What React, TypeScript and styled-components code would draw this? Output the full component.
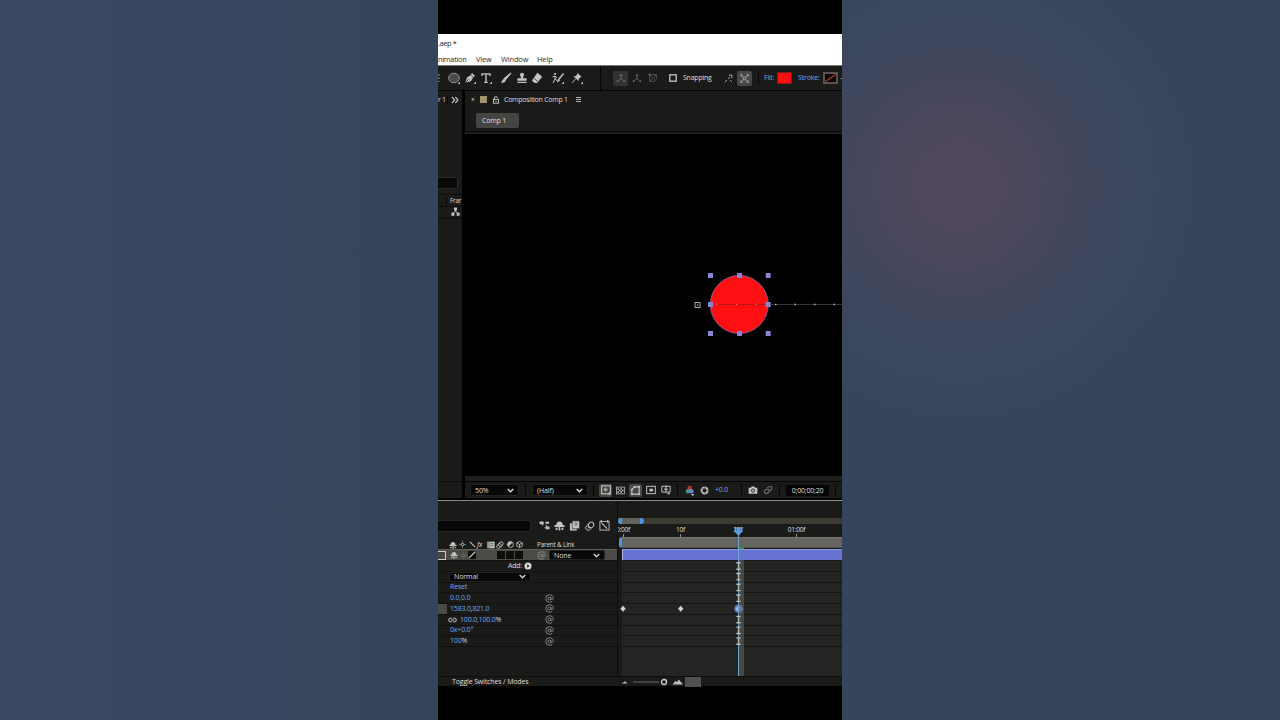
import React from 'react';
import styled, { createGlobalStyle, css } from 'styled-components';

const GlobalStyle = createGlobalStyle`
  * { box-sizing: border-box; }
  html, body { margin: 0; background: #36455c; }
  body { width: 1280px; height: 720px; overflow: hidden; }
`;

const c = {
  panel: '#1a1a18',
  text: '#dededc',
  icon: '#c2c2c0',
  blue: '#70a6f0',
};

const Stage = styled.div`
  display: grid;
  grid-template-columns: 438px 404px 438px;
  width: 1280px;
  height: 720px;
  overflow: hidden;
  font-family: 'Open Sans', 'Noto Sans', sans-serif;
  font-size: 7px;
  font-weight: 500;
  color: ${c.text};
`;

const LeftBackdrop = styled.div`
  background: linear-gradient(90deg, #3a4961 0%, #384760 35%, #36445b 100%);
`;

const RightBackdrop = styled.div`
  background: radial-gradient(
    circle 270px at 117px 185px,
    #53485e 0px, #4f485e 38px, #49475d 80px, #42465b 118px, #3d475e 150px, #39475f 190px, #36455c 240px
  );
`;

const Phone = styled.main`
  display: flex;
  flex-direction: column;
  background: #000;
  padding: 34px 0;
  overflow: hidden;
`;

const TitleBar = styled.header`
  height: 31px;
  flex: none;
  background: #fff;
  color: #2b2b2b;
  font-size: 7.4px;
  font-weight: 400;
  letter-spacing: -0.1px;
  white-space: nowrap;
`;

const FileName = styled.div`
  height: 18px;
  line-height: 19px;
  letter-spacing: -0.4px;
`;

const Menu = styled.nav`
  display: flex;
  height: 13px;
  line-height: 14px;
`;

const MenuItem = styled.span<{ $w: number }>`
  width: ${(p) => p.$w}px;
  flex: none;
`;

const MenuEdgeItem = styled(MenuItem)`
  letter-spacing: -0.3px;
`;

const Row = styled.div<{ $h: number }>`
  display: flex;
  align-items: center;
  height: ${(p) => p.$h}px;
  flex: none;
  white-space: nowrap;
`;

const Toolbar = styled(Row)`
  background: ${c.panel};
  border-top: 1px solid #777775;
  border-bottom: 1px solid #050505;
`;

const HeaderRow = styled(Row)`
  padding-top: 8px;
`;

const Slot = styled.span<{ $w: number; $ml?: number; $on?: boolean; $dim?: boolean; $h?: number }>`
  display: flex;
  align-items: center;
  justify-content: center;
  flex: none;
  width: ${(p) => p.$w}px;
  height: ${(p) => p.$h ?? 15}px;
  margin-left: ${(p) => p.$ml ?? 0}px;
  border-radius: 2px;
  color: ${(p) => (p.$dim ? '#70706e' : c.icon)};
  ${(p) => p.$on && css`background: ${p.$dim ? '#333331' : '#484846'};`}
  svg { display: block; flex: none; overflow: visible; }
`;

const Label = styled.span<{ $w?: number; $ml?: number; $blue?: boolean; $ls?: number; $size?: number }>`
  flex: none;
  width: ${(p) => (p.$w ? p.$w + 'px' : 'auto')};
  margin-left: ${(p) => p.$ml ?? 0}px;
  color: ${(p) => (p.$blue ? c.blue : c.text)};
  letter-spacing: ${(p) => p.$ls ?? -0.18}px;
  font-size: ${(p) => p.$size ?? 7}px;
  line-height: 10px;
`;

const Sep = styled.span<{ $ml: number; $h?: number }>`
  flex: none;
  width: 1px;
  height: ${(p) => p.$h ?? 24}px;
  margin-left: ${(p) => p.$ml}px;
  background: #060606;
`;

const Swatch = styled.span<{ $fill: string }>`
  flex: none;
  width: 15px;
  height: 12px;
  background: ${(p) => p.$fill};
  border: 1px solid #7b1a18;
`;

const StrokeSwatch = styled(Swatch)`
  border: 2px solid #5d504e;
  svg { display: block; }
`;

const Workspace = styled.section`
  display: grid;
  grid-template-columns: 24px 377px;
  column-gap: 3px;
  height: 407px;
  margin-bottom: 2px;
  flex: none;
`;

const ProjectPanel = styled.aside`
  display: flex;
  flex-direction: column;
  background: ${c.panel};
  overflow: hidden;
`;

const ProjectBlank = styled.div<{ $h: number; $line?: boolean }>`
  height: ${(p) => p.$h}px;
  flex: none;
  border-top: ${(p) => (p.$line ? '1px solid #0d0d0c' : '0')};
`;

const ProjectSearch = styled.div`
  width: 20px;
  height: 12px;
  flex: none;
  background: #090909;
  border: 1px solid #2a2a28;
  border-left: 0;
  border-radius: 0 2px 2px 0;
`;

const CompPanel = styled.section`
  display: flex;
  flex-direction: column;
  background: ${c.panel};
  overflow: hidden;
`;

const CompChip = styled.span`
  margin: 1px 0 0 11px;
  width: 43px;
  height: 15px;
  padding-left: 6px;
  border-radius: 2px;
  background: #454543;
  line-height: 15px;
  letter-spacing: -0.2px;
`;

const Strip = styled.div<{ $h: number }>`
  height: ${(p) => p.$h}px;
  flex: none;
  background: #1e1e1c;
  border-top: 1px solid #050505;
`;

const Canvas = styled.div`
  position: relative;
  height: 341px;
  flex: none;
  background: #000;
  overflow: hidden;
  svg { display: block; }
`;

const ControlBar = styled(Row)`
  border-top: 1px solid #050505;
`;

const Dropdown = styled.span<{ $w: number; $ml: number; $h?: number }>`
  display: flex;
  align-items: center;
  justify-content: space-between;
  flex: none;
  width: ${(p) => p.$w}px;
  height: ${(p) => p.$h ?? 12}px;
  margin-left: ${(p) => p.$ml}px;
  padding: 0 4px 0 4px;
  background: #080808;
  border: 1px solid #232321;
  border-radius: 2px;
  line-height: 9px;
  letter-spacing: -0.1px;
  svg { display: block; }
`;

const TimeBox = styled.span`
  flex: none;
  width: 43px;
  height: 11px;
  margin-left: 6px;
  background: #050505;
  border-radius: 2px;
  text-align: center;
  line-height: 11px;
  letter-spacing: -0.2px;
`;

const Timeline = styled.section`
  display: grid;
  grid-template-columns: 180px 224px;
  grid-template-rows: 175px 10px;
  height: 186px;
  flex: none;
  background: ${c.panel};
  border-top: 1px solid #8b8b88;
`;

const LayerColumn = styled.div`
  display: flex;
  flex-direction: column;
  padding-top: 18px;
  border-right: 1px solid #0d0d0c;
`;

const SearchBox = styled.span`
  flex: none;
  width: 93px;
  height: 12px;
  background: #080808;
  border: 1px solid #252523;
  border-left: 0;
  border-radius: 0 2px 2px 0;
`;

const LayerRow = styled(Row)`
  background: #4a4a47;
  border-top: 1px solid #5e5e5a;
  border-bottom: 1px solid #111110;
`;

const LayerBox = styled.span`
  width: 8px;
  height: 9px;
  flex: none;
  background: #454542;
  border: 1px solid #cfcfc8;
  border-left: 0;
`;

const Dark = styled.span<{ $ml: number }>`
  width: 8px;
  height: 8px;
  flex: none;
  margin-left: ${(p) => p.$ml}px;
  background: #0d0d0c;
`;

const PropRow = styled(Row)`
  height: 10.75px;
  border-bottom: 1px solid #111110;
`;

const Chosen = styled.span`
  width: 9px;
  height: 10px;
  flex: none;
  background: #4a4a47;
`;

const WhiteText = styled.span`
  color: ${c.text};
`;

const Tag = styled.span`
  width: 7px;
  height: 7px;
  flex: none;
  margin-left: 3px;
  background: #a3966f;
`;

const TrackColumn = styled.div`
  position: relative;
  display: flex;
  flex-direction: column;
  padding-top: 17px;
  overflow: hidden;
`;

const Navigator = styled.div`
  display: flex;
  height: 6px;
  flex: none;
  background: #3c3c33;
`;

const NavRange = styled.span`
  width: 26px;
  height: 6px;
  background: #62625e;
  border: solid #4b93dc;
  border-width: 0 4px;
  border-radius: 3px;
`;

const Ruler = styled.div`
  display: flex;
  height: 13px;
  flex: none;
  font-size: 6.6px;
  letter-spacing: -0.25px;
`;

const RulerMark = styled.span<{ $w: number }>`
  display: flex;
  flex-direction: column;
  align-items: center;
  flex: none;
  width: ${(p) => p.$w}px;
  line-height: 9px;
  padding-top: 1px;
  white-space: nowrap;
  &::after {
    content: '';
    width: 1px;
    height: 3px;
    background: #8d8d89;
  }
`;

const WorkArea = styled.div`
  height: 11px;
  flex: none;
  margin-left: 1px;
  background: #67655f;
  border-left: 3px solid #4b93dc;
  border-top: 1px solid #77756f;
  border-bottom: 1px solid #55534e;
  border-radius: 3px 0 0 3px;
`;

const LayerTrack = styled.div`
  height: 11px;
  margin: 1px 0 1px 4px;
  flex: none;
  background: #6673d0;
  border-top: 1px solid #8c98e0;
  border-left: 1px solid #b4bae6;
`;

const TrackRow = styled.div`
  height: 10.75px;
  flex: none;
  margin-left: 4px;
  background: #242422;
  border-bottom: 1px solid #141413;
`;

const TrackRest = styled.div`
  flex: 1;
  margin-left: 4px;
  background: #242422;
`;

const Overlay = styled.svg`
  position: absolute;
  left: 0;
  top: 0;
`;

const Footer = styled(Row)`
  border-top: 1px solid #0d0d0c;
`;

const ScrollThumb = styled.span`
  width: 16px;
  height: 10px;
  margin-left: 1px;
  background: #50504e;
`;

const Chevron = () => (
  <svg width="7" height="5" viewBox="0 0 7 5"><path d="M.7 1l2.8 2.8L6.3 1" fill="none" stroke="#d8d8d6" strokeWidth="1.3" /></svg>
);

type IconProps = { children: React.ReactNode; s?: number };
const Icon = ({ children, s = 12 }: IconProps) => (
  <svg width={s} height={s} viewBox="0 0 12 12" fill="none" stroke="currentColor" strokeWidth="1">{children}</svg>
);
const Corner = () => <path d="M12 9.6V12H9.6z" fill="currentColor" stroke="none" />;

const Ellipse = () => <Icon><ellipse cx="6" cy="6" rx="5.4" ry="4.8" fill="#4b4b49" stroke="#8b8b89" /><Corner /></Icon>;
const Pen = () => <Icon><path d="M1.2 10.8L3 5.5 6.8 3l2.4 2.5-2.4 3.8z" fill="currentColor" stroke="none" /><path d="M7.4 1.6l3 3" strokeWidth="2" /><path d="M1.4 10.6l3.4-3.4" stroke="#1a1a18" strokeWidth=".8" /><Corner /></Icon>;
const TypeTool = () => <Icon><path d="M2 4V1.9h8V4M6 2v8.4M4.2 10.4h3.6" strokeWidth="1.4" /><Corner /></Icon>;
const Brush = () => <Icon><path d="M11 1L5.6 7.4 4.4 6.4z" fill="currentColor" strokeWidth="1.1" /><path d="M4.2 6.8l1.6 1.4C5.4 10.4 3 11 .8 10.8 2.3 9.8 2 7.4 4.2 6.8z" fill="currentColor" stroke="none" /></Icon>;
const Stamp = () => <Icon><path d="M6 .8a2 2 0 012 2c0 1.3-1 1.8-1 3.4h3.6v2.6H1.4V6.2H5C5 4.6 4 4.1 4 2.8a2 2 0 012-2zM1.4 9.7h9.2V11H1.400z" fill="currentColor" stroke="none" /></Icon>;
const Eraser = () => <Icon><path d="M6.4.8l4.8 4-5 6.2H3.4L.9 8.4z" fill="currentColor" stroke="none" /><path d="M2.9 6.2l4.2 3.6" stroke="#1a1a18" strokeWidth=".7" /></Icon>;
const Roto = () => <Icon><circle cx="3" cy="2" r="1.1" fill="currentColor" stroke="none" /><path d="M.5 5l2.5-1 2 2M3 4v3l-2 4M3 7l2 1.5" /><path d="M11.5 1.5L7 7" strokeWidth="1.5" /><path d="M6.5 6.5L8 8c-.6 1.6-2 2.2-3.4 2 1-.8.7-2.6 1.9-3.5z" fill="currentColor" stroke="none" /><Corner /></Icon>;
const Pin = () => <Icon><path d="M6.3.8l4.4 4.1-1.5.4-1.4 1.7-.2 2L2.6 4.4l2.3-.3 1.3-1.5z" fill="currentColor" stroke="none" /><path d="M4.8 6.8L1 10.8" /><Corner /></Icon>;
const Axis = () => <Icon s={10}><path d="M6 2v4.5M6 6.5L2.5 9.7M6 6.5l3.5 3.2" /><path d="M4.3 3.2L6 1l1.7 2.2zM1 8l2.6 2.8H1zM11 8l-2.6 2.8H11z" fill="currentColor" stroke="none" /></Icon>;
const AxisView = () => <Icon s={10}><path d="M2 2l8 8M10 2L7 5M2 10l3-3M2 4v6h6M4 2h6v5M1 1h2v2H1z" strokeWidth=".8" /></Icon>;
const SnapLine = () => <Icon s={9}><path d="M1 11l3-3M5.5 6.5L8 4" strokeWidth="1.1" /><path d="M6.5 1.5h4v4M8 8l2.5 2.5" strokeWidth="1.1" /></Icon>;
const SnapBox = () => <Icon s={9}><path d="M1 3.5V1h2.5M8.5 1H11v2.5M11 8.5V11H8.5M3.5 11H1V8.5M1 1l3.3 3.3M11 1L7.7 4.3M1 11l3.3-3.3M11 11L7.7 7.7M4.3 4.3h3.4v3.4H4.3z" strokeWidth=".9" /></Icon>;
const Lock = () => <Icon s={8}><rect x="2.2" y="5" width="7.6" height="5.8" strokeWidth="1.5" /><path d="M3.5 5V3a2.2 2.2 0 014.4 0" strokeWidth="1.5" /><path d="M6 7v2" strokeWidth="1.5" /></Icon>;
const Burger = () => <Icon s={5}><path d="M0 1.2h12M0 6h12M0 10.8h12" strokeWidth="2.2" /></Icon>;
const More = () => <Icon s={8}><path d="M1.5 1.5L5.5 6l-4 4.5M6.5 1.5l4 4.5-4 4.5" strokeWidth="1.7" /></Icon>;
const Network = () => <Icon s={9}><path d="M4 .5h4v4H4zM.5 7.5h4v4h-4zM7.5 7.5h4v4h-4z" fill="currentColor" stroke="none" /><path d="M6 4v2M2.5 8l3.5-2 3.5 2" strokeWidth="1.2" /></Icon>;

const FastPreview = () => <Icon s={10}><rect x=".8" y="1" width="10.4" height="9.6" strokeWidth="1.3" /><path d="M5.5 3v5M3 5.5h5M3.8 3.8l3.4 3.4M7.2 3.8L3.8 7.2" strokeWidth=".8" /><path d="M11.5 7.5v4h-4z" fill="currentColor" stroke="none" /></Icon>;
const Checker = () => <Icon s={9}><rect x=".7" y="1.5" width="10.6" height="9" /><path d="M2 3h2v2H2zM6 3h2v2H6zM4 5h2v2H4zM8 5h2v2H8zM2 7h2v2H2zM6 7h2v2H6z" fill="currentColor" stroke="none" /></Icon>;
const MaskShape = () => <Icon s={11}><path d="M2 10V5l3-3h5v8z" strokeWidth="1.2" /><path d="M1 9h2v2H1zM9 9h2v2H9zM9 1h2v2H9zM4 1h2v2H4zM1 4h2v2H1z" fill="currentColor" stroke="none" /></Icon>;
const Region = () => <Icon s={10}><rect x=".8" y="1.6" width="10.4" height="8.8" strokeWidth="1.2" /><rect x="4" y="4.5" width="4.5" height="3.2" fill="currentColor" stroke="none" /></Icon>;
const Guides = () => <Icon s={10}><path d="M1 1.5h10v7H1zM6 .5v9M3.5 5h5" strokeWidth="1.2" /><path d="M7.5 9.5H11L9.3 12z" fill="currentColor" stroke="none" /></Icon>;
const Channels = () => (
  <svg width="10" height="11" viewBox="0 0 10 11"><circle cx="4.7" cy="3" r="2.3" fill="#b8342f" /><circle cx="3" cy="6.3" r="2.3" fill="#3f9a77" /><circle cx="6.3" cy="6.3" r="2.3" fill="#6d86d6" /><path d="M6 9h3.5L7.8 11z" fill="#c5c5c3" /></svg>
);
const Aperture = () => <Icon s={9}><circle cx="6" cy="6" r="3.9" strokeWidth="2.6" /><path d="M6 1l2 3.5M11 5L7.5 7M8 10.5L5.5 7.5M2 9l2.5-2.5M2 3.5l3 .5" stroke="#1a1a18" strokeWidth=".7" /></Icon>;
const Camera = () => <Icon s={10}><path d="M.8 3.2h2.6l1-1.5h3.2l1 1.5h2.6v7.3H.8z" fill="currentColor" stroke="none" /><circle cx="6" cy="6.7" r="1.9" fill="currentColor" stroke="#1a1a18" strokeWidth="1.1" /></Icon>;
const ShowSnap = () => <Icon s={10}><ellipse cx="4.5" cy="7.5" rx="3.2" ry="2.3" transform="rotate(-30 4.5 7.5)" strokeWidth="1.3" /><path d="M5 3.5l2-1.5h3.5v3L9 7" strokeWidth="1.3" /></Icon>;

const Flow = () => <Icon s={11}><path d="M0 3h5M4 6V3M8 5.5v3H6" /><path d="M1 1.5h4v3H1zM7 2h4v2H7zM7.5 7h4v3h-4z" fill="currentColor" stroke="none" /></Icon>;
const ShyFigure = ({ s }: { s: number }) => <Icon s={s}><path d="M2.5 5.5a3.5 4 0 017 0zM.6 5.5h10.8v2H.6zM5.1 7h1.8v4.5H5.1zM1.8 8.5h2V11h-2zM8.2 8.5h2V11h-2z" fill="currentColor" stroke="none" /></Icon>;
const Frames = () => <Icon s={11}><path d="M1 3.5h7.5v8H1z" fill="currentColor" stroke="none" /><path d="M3.5 1h8v8.5h-8z" fill="currentColor" stroke="#1a1a18" strokeWidth=".6" /><path d="M6 3.5h3.5M6 5.5h3.5" stroke="#1a1a18" strokeWidth=".6" /></Icon>;
const Motion = () => <Icon s={10}><g transform="rotate(-45 6 6)"><ellipse cx="7.8" cy="6" rx="3.4" ry="3.1" strokeWidth="1.2" /><path d="M6 2.9H3a3.1 3.1 0 000 6.2h3M5 4.7H3.2M4.5 6H2.2M5 7.3H3.2" /></g></Icon>;
const Graph = () => <Icon s={11}><rect x="1" y="1.5" width="10" height="9.5" /><path d="M3 3.5l6 6M2.5 0v3M9.5 0v3" strokeWidth="1.2" /></Icon>;
const Sun = () => <Icon s={7}><circle cx="6" cy="6" r="2.3" strokeWidth="1.5" /><path d="M6 .5v2M6 9.5v2M.5 6h2M9.5 6h2" strokeWidth="1.5" /></Icon>;
const Slash = () => <Icon s={7}><path d="M1.5 1.5l9 9" strokeWidth="1.8" /></Icon>;
const Quality = () => <Icon s={8}><path d="M1 11L11 1" strokeWidth="1.6" /></Icon>;
const Film = () => <Icon s={8}><path d="M.5 1h11v10H.5z" fill="currentColor" stroke="none" /><path d="M3 1v10M5 4h5M5 7h5" stroke="#1a1a18" strokeWidth=".8" /></Icon>;
const Blur = () => <Icon s={8}><ellipse cx="7.2" cy="4.8" rx="4" ry="3" transform="rotate(-45 7.2 4.8)" strokeWidth="1.3" /><ellipse cx="4.5" cy="7.5" rx="4" ry="3" transform="rotate(-45 4.5 7.5)" strokeWidth="1.2" /></Icon>;
const Half = () => <Icon s={7}><circle cx="6" cy="6" r="5" strokeWidth="1.5" /><path d="M2.6 9.4A4.800 4.800 0 019.400 2.600z" fill="currentColor" stroke="none" /></Icon>;
const Cube = () => <Icon s={7}><path d="M6 .8l4.7 2.5v5.4L6 11.2 1.3 8.7V3.3zM1.3 3.3L6 6l4.7-2.7M6 6v5" strokeWidth="1.4" /></Icon>;
const Whip = () => <Icon s={9}><path d="M7.8 6a1.9 1.9 0 10-3.8 0 1.9 1.9 0 003.8 0V3.8M7.8 6c0 2.4 3.2 2 3.2-.8C11 2.7 9 1 6 1a5 5 0 100 10c1.5 0 2.5-.3 3.5-1" stroke="#8b8b89" strokeWidth="1.2" /></Icon>;
const AddDot = () => <Icon s={8}><circle cx="6" cy="6" r="5.3" fill="#d8d8d6" stroke="none" /><path d="M4.8 3.2L8.3 6 4.8 8.8z" fill="#1a1a18" stroke="none" /></Icon>;
const Link = () => (
  <svg width="9" height="6" viewBox="0 0 9 6" fill="none" stroke="#c5c5c3" strokeWidth="1"><path d="M3.8 1.2H2.5a1.8 1.8 0 000 3.6h1.3M5.2 1.2h1.3a1.8 1.8 0 010 3.6H5.2M2.8 3h3.4" /></svg>
);

const HANDLES = [[245.5, 141.5], [274.5, 141.5], [303.2, 141.5], [245.5, 170.5], [303.2, 170.5], [245.5, 199.5], [274.5, 199.5], [303.2, 199.5]];

const Viewer = () => (
  <Canvas>
    <svg width="377" height="341" viewBox="0 0 377 341">
      <circle cx="274.3" cy="170.5" r="29" fill="#fe1012" stroke="#8e5a9c" strokeWidth=".9" />
      <path d="M250 170.5h50" stroke="#a81416" strokeWidth=".8" />
      <path d="M306 170.5h71" stroke="#303030" strokeWidth="1" />
      {[252, 271.5, 291].map((x) => <rect key={x} x={x - 0.5} y="169.7" width="1.3" height="1.3" fill="#f06a60" />)}
      {[310.5, 330, 349.5, 369].map((x) => <rect key={x} x={x - 0.5} y="169.7" width="1.5" height="1.5" fill="#b5b5b5" />)}
      {HANDLES.map(([x, y]) => <rect key={`${x}-${y}`} x={x - 2.5} y={y - 2.5} width="5" height="5" fill="#8585d0" />)}
      <rect x="230" y="168.5" width="5" height="5" fill="#111" stroke="#a5a5a3" strokeWidth="1" />
      <rect x="232" y="170.5" width="1" height="1" fill="#ddd" />
    </svg>
  </Canvas>
);

const ROWS = [0, 1, 2, 3, 4, 5, 6, 7];

const PlayheadLayer = () => (
  <Overlay width="224" height="175" viewBox="0 0 224 175">
    <rect x="120" y="59" width="6" height="116" fill="#464948" />
    <rect x="121" y="46" width="5" height="2" fill="#2f8f4a" />
    <path d="M120.5 33v142" stroke="#6fa6cf" strokeWidth="1" />
    {ROWS.filter((i) => i !== 4).map((i) => (
      <path key={i} d="M-2.2 -3.2h4.4M0 -3.2v6.4M-2.2 3.2h4.4" transform={`translate(120.5 ${65 + i * 10.72})`} stroke="#b4bcbe" strokeWidth="1.4" fill="none" />
    ))}
    <path d="M116.5 26.5h8v4L120.5 35l-4-4.5z" fill="#5b9fe0" />
    <path d="M118.5 27.5v2M122.5 27.5v2" stroke="#2d5c90" strokeWidth=".8" />
    {[5, 62.7].map((x) => <path key={x} d={`M${x} 104.8l2.7 3-2.7 3-2.7-3z`} fill="#d2d2d0" />)}
    <circle cx="120.5" cy="107.8" r="4.3" fill="#5f7fae" />
    <path d="M120.5 104.5v6.6l-3-3.3z" fill="#9fc4ea" />
  </Overlay>
);

const TimelinePanel = () => (
  <Timeline>
    <LayerColumn>
      <Row $h={13}>
        <SearchBox />
        <Slot $w={15} $ml={6}><Flow /></Slot>
        <Slot $w={15}><ShyFigure s={11} /></Slot>
        <Slot $w={15}><Frames /></Slot>
        <Slot $w={15}><Motion /></Slot>
        <Slot $w={15}><Graph /></Slot>
      </Row>
      <HeaderRow $h={17}>
        <Slot $w={10} $ml={10} $h={10}><ShyFigure s={8} /></Slot>
        <Slot $w={9} $h={10}><Sun /></Slot>
        <Slot $w={10} $h={10}><Slash /></Slot>
        <Label $w={9} $ls={-0.3}><i>fx</i></Label>
        <Slot $w={9} $h={10}><Film /></Slot>
        <Slot $w={10} $h={10}><Blur /></Slot>
        <Slot $w={10} $h={10}><Half /></Slot>
        <Slot $w={9} $h={10}><Cube /></Slot>
        <Label $ml={13} $size={6.3} $ls={-0.15}>Parent &amp; Link</Label>
      </HeaderRow>
      <LayerRow $h={12}>
        <LayerBox />
        <Slot $w={13} $ml={1} $h={9}><ShyFigure s={8} /></Slot>
        <Slot $w={7} $h={9} $dim><Sun /></Slot>
        <Dark $ml={1}><Quality /></Dark>
        <Dark $ml={21} />
        <Dark $ml={1} />
        <Dark $ml={1} />
        <Slot $w={9} $ml={14} $h={9}><Whip /></Slot>
        <Dropdown $w={56} $ml={3} $h={10}>None<Chevron /></Dropdown>
      </LayerRow>
      <PropRow $h={11}><Label $ml={70}>Add:</Label><Slot $w={9} $ml={1} $h={9}><AddDot /></Slot></PropRow>
      <PropRow $h={11}><Dropdown $w={82} $ml={11} $h={10}>Normal<Chevron /></Dropdown></PropRow>
      <PropRow $h={11}><Label $w={94} $ml={12} $blue>Reset</Label></PropRow>
      <PropRow $h={11}><Label $w={94} $ml={12} $blue>0.0,0.0</Label><Slot $w={11} $h={9}><Whip /></Slot></PropRow>
      <PropRow $h={11}><Chosen /><Label $w={94} $ml={3} $blue>1583.0<WhiteText>,</WhiteText>821.0</Label><Slot $w={11} $h={9}><Whip /></Slot></PropRow>
      <PropRow $h={11}><Slot $w={11} $ml={9} $h={9}><Link /></Slot><Label $w={84} $ml={2} $blue>100.0,100.0<WhiteText>%</WhiteText></Label><Slot $w={11} $h={9}><Whip /></Slot></PropRow>
      <PropRow $h={11}><Label $w={94} $ml={12} $blue>0x+0.0°</Label><Slot $w={11} $h={9}><Whip /></Slot></PropRow>
      <PropRow $h={11}><Label $w={94} $ml={12} $blue>100<WhiteText>%</WhiteText></Label><Slot $w={11} $h={9}><Whip /></Slot></PropRow>
    </LayerColumn>
    <TrackColumn>
      <Navigator><NavRange /></Navigator>
      <Ruler>
        <RulerMark $w={10}>0:00f</RulerMark>
        <RulerMark $w={105}>10f</RulerMark>
        <RulerMark $w={10}>20f</RulerMark>
        <RulerMark $w={107}>01:00f</RulerMark>
      </Ruler>
      <WorkArea />
      <LayerTrack />
      {ROWS.map((i) => <TrackRow key={i} />)}
      <TrackRest />
      <PlayheadLayer />
    </TrackColumn>
    <Footer $h={10}><Label $ml={14} $ls={-0.15}>Toggle Switches / Modes</Label></Footer>
    <Footer $h={10}>
      <svg width="66" height="10" viewBox="0 0 66 10">
        <path d="M3.5 6.5L6 5l1-.7L9.5 6.5z" fill="#bdbdbb" />
        <path d="M15 5h26" stroke="#6c6c6a" />
        <circle cx="46" cy="5" r="2.5" fill="none" stroke="#d0d0ce" strokeWidth="1.3" />
        <path d="M54.5 7.500L57.5 4l1.5 1 1.8-2.5L65 7.5z" fill="#bdbdbb" />
      </svg>
      <ScrollThumb />
    </Footer>
  </Timeline>
);

export default function App() {
  return (
    <Stage>
      <GlobalStyle />
      <LeftBackdrop />
      <Phone>
        <TitleBar>
          <FileName>.aep *</FileName>
          <Menu>
            <MenuEdgeItem $w={38}>nimation</MenuEdgeItem>
            <MenuItem $w={25}>View</MenuItem>
            <MenuItem $w={36}>Window</MenuItem>
            <MenuItem $w={30}>Help</MenuItem>
          </Menu>
        </TitleBar>
        <Toolbar $h={26}>
          <Slot $w={8}><svg width="8" height="10" viewBox="0 0 8 10"><path d="M1 1v8" stroke="#bdbdbb" strokeDasharray="1.5 2" /></svg></Slot>
          <Slot $w={16}><Ellipse /></Slot>
          <Slot $w={16}><Pen /></Slot>
          <Slot $w={16}><TypeTool /></Slot>
          <Slot $w={16} $ml={4}><Brush /></Slot>
          <Slot $w={15}><Stamp /></Slot>
          <Slot $w={16}><Eraser /></Slot>
          <Slot $w={16} $ml={5}><Roto /></Slot>
          <Slot $w={20} $ml={1}><Pin /></Slot>
          <Sep $ml={13} />
          <Slot $w={15} $ml={12} $on $dim><Axis /></Slot>
          <Slot $w={16} $ml={1} $dim><Axis /></Slot>
          <Slot $w={16} $dim><AxisView /></Slot>
          <Slot $w={16} $ml={4}><Icon s={8}><rect x="1.2" y="1.2" width="9.6" height="9.6" strokeWidth="2" /></Icon></Slot>
          <Label $w={36} $ml={2} $ls={-0.22}>Snapping</Label>
          <Slot $w={16} $ml={1}><SnapLine /></Slot>
          <Slot $w={15} $ml={1} $on><SnapBox /></Slot>
          <Sep $ml={6} $h={12} />
          <Label $w={13} $ml={5} $blue>Fill:</Label>
          <Swatch $fill="#fe1012" />
          <Label $w={25} $ml={6} $blue>Stroke:</Label>
          <StrokeSwatch $fill="#0c0808"><svg width="11" height="8" viewBox="0 0 11 8"><path d="M.5 7.5l10-7" stroke="#a8432f" strokeWidth="1.2" /></svg></StrokeSwatch>
          <Label $ml={2}>-</Label>
        </Toolbar>
        <Workspace>
          <ProjectPanel>
            <Row $h={17}><Label $w={8} $ls={-0.4}>r 1</Label><Sep $ml={1} $h={9} /><Slot $w={14}><More /></Slot></Row>
            <ProjectBlank $h={69} />
            <ProjectSearch />
            <ProjectBlank $h={5} />
            <ProjectBlank $h={12} $line><Row $h={11}><Sep $ml={8} $h={8} /><Label $ml={3} $size={6.3} $ls={-0.2}>Frar</Label></Row></ProjectBlank>
            <ProjectBlank $h={12} $line><Slot $w={12} $ml={11} $h={9}><Network /></Slot></ProjectBlank>
            <ProjectBlank $h={263} $line />
            <ProjectBlank $h={17} $line />
          </ProjectPanel>
          <CompPanel>
            <Row $h={17}>
              <Label $w={6} $ml={6} $size={6.5}>×</Label>
              <Tag />
              <Slot $w={10} $ml={4}><Lock /></Slot>
              <Label $w={66} $ml={3} $ls={-0.26}>Composition Comp 1</Label>
              <Slot $w={9} $ml={4}><Burger /></Slot>
            </Row>
            <Row $h={23}><CompChip>Comp 1</CompChip></Row>
            <Strip $h={3} />
            <Viewer />
            <Strip $h={6} />
            <ControlBar $h={17}>
              <Dropdown $w={49} $ml={5}>50%<Chevron /></Dropdown>
              <Sep $ml={6} $h={12} />
              <Dropdown $w={56} $ml={6}>(Half)<Chevron /></Dropdown>
              <Sep $ml={5} $h={12} />
              <Slot $w={13} $ml={5} $h={13} $on><FastPreview /></Slot>
              <Slot $w={15} $ml={1}><Checker /></Slot>
              <Slot $w={13} $ml={1} $h={13} $on><MaskShape /></Slot>
              <Slot $w={15} $ml={1}><Region /></Slot>
              <Slot $w={15}><Guides /></Slot>
              <Sep $ml={4} $h={12} />
              <Slot $w={15} $ml={4}><Channels /></Slot>
              <Slot $w={15}><Aperture /></Slot>
              <Label $w={24} $ml={3} $blue>+0.0</Label>
              <Sep $ml={2} $h={12} />
              <Slot $w={15} $ml={3}><Camera /></Slot>
              <Slot $w={15} $dim><ShowSnap /></Slot>
              <Sep $ml={4} $h={12} />
              <TimeBox>0;00;00;20</TimeBox>
              <Sep $ml={6} $h={12} />
            </ControlBar>
          </CompPanel>
        </Workspace>
        <TimelinePanel />
      </Phone>
      <RightBackdrop />
    </Stage>
  );
}
